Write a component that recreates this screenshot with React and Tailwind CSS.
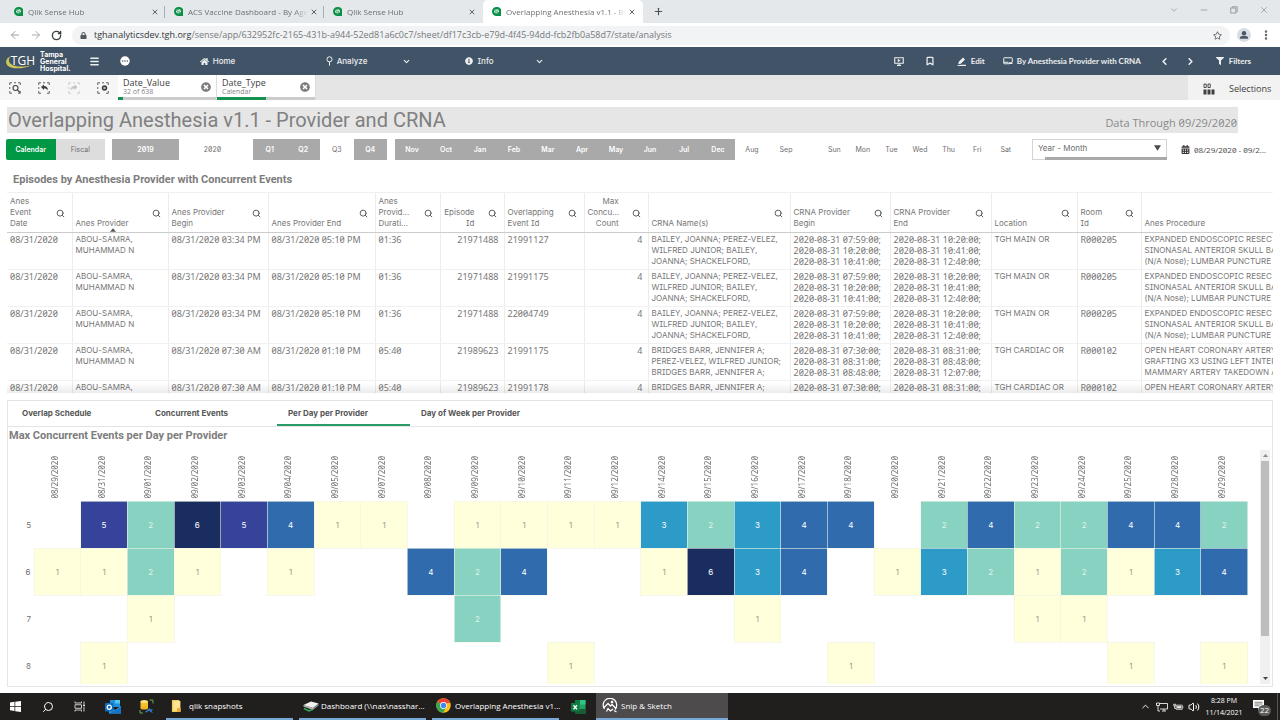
import React from "react";
import { FaHome, FaInfoCircle, FaFilter, FaLock, FaCalendarAlt, FaRegStar, FaTimesCircle } from "react-icons/fa";
import { ArrowLeft, ArrowRight, RotateCw, X, Plus, Minus, ChevronDown, ChevronLeft, ChevronRight, ChevronUp, Search, Menu, Bookmark, MoreVertical, Volume2 } from "lucide-react";

const QLIK = "font-[Inter,'Liberation_Sans',sans-serif] [font-feature-settings:'cv08','zero']";
const NUM = "font-['Noto_Sans','Liberation_Sans',sans-serif] text-[9px] [font-feature-settings:'zero']";

/* ---------- Browser ---------- */

function QlikMark() {
  return (
    <svg viewBox="0 0 18 18" className="size-[9px] shrink-0" aria-hidden="true">
      <path d="M9 0a9 9 0 1 0 0 18h9v-4.5A9 9 0 0 0 9 0z" fill="#0a8f46" />
      <circle cx="9" cy="8.600" r="4.600" fill="#fff" />
      <path d="M11 6.500a2.800 1.800 0 1 0-2 2.300 2.600 1.700 0 1 1-2.400 2" fill="none" stroke="#0a8f46" strokeWidth="1.700" />
    </svg>
  );
}

const BROWSER_TABS = [
  { title: "Qlik Sense Hub", width: "w-[160px]" },
  { title: "ACS Vaccine Dashboard - By Age", width: "w-[159px]" },
  { title: "Qlik Sense Hub", width: "w-[159px]" },
  { title: "Overlapping Anesthesia v1.1 - By", width: "w-[160px]", active: true },
];

const WINDOW_BUTTON = "flex w-[30px] shrink-0 items-center justify-center";

function BrowserTabs() {
  return (
    <div className="flex h-[23px] items-stretch bg-[#e4e8ea] pl-[5px] text-[#6d7073]">
      {BROWSER_TABS.map((tab, i) => (
        <div
          key={i}
          className={`flex shrink-0 items-center gap-[5px] pr-[7px] pl-[9px] ${tab.width} ${tab.active ? "rounded-t-[5px] bg-white" : ""}`}
        >
          <QlikMark />
          <a href="#tab" className="-mr-[3px] min-w-0 flex-1 overflow-hidden whitespace-nowrap text-[8px] [mask-image:linear-gradient(to_right,black_88%,transparent)]">
            {tab.title}
          </a>
          <button aria-label="Close tab" className="text-[#5f6367]"><X className="size-2" strokeWidth={3} /></button>
          {i < 2 && <span className="-mr-[7px] h-3 w-px bg-[#9fb0b8]" />}
        </div>
      ))}
      <button aria-label="New tab" className="ml-[10px] text-[#4c5054]"><Plus className="size-[11px]" strokeWidth={2.500} /></button>
      <div className="ml-auto flex items-stretch pr-[1px] pb-1 text-[#9a9da0]">
        <button aria-label="Search tabs" className={WINDOW_BUTTON}><ChevronDown className="size-[10px]" strokeWidth={2} /></button>
        <button aria-label="Minimize" className={WINDOW_BUTTON}><Minus className="size-[10px]" strokeWidth={2} /></button>
        <button aria-label="Restore" className={WINDOW_BUTTON}>
          <svg viewBox="0 0 16 16" className="size-2" fill="none" stroke="currentColor" strokeWidth="2"><rect x="1.500" y="4" width="10" height="10" /><path d="M4.500 4V1.500h10v10H12" /></svg>
        </button>
        <button aria-label="Close" className={WINDOW_BUTTON}><X className="size-[10px]" strokeWidth={2} /></button>
      </div>
    </div>
  );
}

function AddressBar() {
  return (
    <div className="flex h-6 items-center bg-white pr-2 pl-[9px] text-[#5f6367]">
      <button aria-label="Back" className="text-[#9b9ea1]"><ArrowLeft className="size-3" strokeWidth={2} /></button>
      <button aria-label="Forward" className="ml-[9px] text-[#a8abad]"><ArrowRight className="size-3" strokeWidth={2} /></button>
      <button aria-label="Reload" className="ml-[9px] text-[#3c4043]"><RotateCw className="size-[11px]" strokeWidth={3} /></button>
      <div className="ml-[10px] flex h-[19px] flex-1 items-center rounded-full bg-[#f1f3f4] pr-2 pl-2">
        <FaLock className="size-[7px] text-[#55595d]" />
        <div className="ml-[7px] flex-1 whitespace-nowrap text-[9px] text-[#75797d]">
          <span className="text-[#35383b]">tghanalyticsdev.tgh.org</span>/sense/app/632952fc-2165-431b-a944-52ed81a6c0c7/sheet/df17c3cb-e79d-4f45-94dd-fcb2fb0a58d7/state/analysis
        </div>
        <button aria-label="Bookmark this page"><FaRegStar className="size-[9px]" /></button>
      </div>
      <button aria-label="Profile" className="ml-[7px] flex size-[14px] items-center justify-center rounded-full bg-[#d9dee4] text-[#4b5869]">
        <svg viewBox="0 0 16 16" className="size-[10px]" fill="currentColor"><circle cx="8" cy="5" r="3.500" /><path d="M1.500 14v-1.500C1.500 10 5 9.300 8 9.300s6.500.7 6.500 3.200V14z" /></svg>
      </button>
      <button aria-label="Browser menu" className="ml-[9px]"><MoreVertical className="size-3" strokeWidth={3} /></button>
    </div>
  );
}

/* ---------- Application header ---------- */

function Logo() {
  return (
    <div className="flex w-[69px] items-center gap-[5px] text-white">
      <div className="relative flex h-[18px] w-[29px] shrink-0 items-center justify-end">
        <svg viewBox="0 0 58 36" className="absolute inset-0 h-full w-full" aria-hidden="true">
          <path d="M10 8C0 12-3 22 4 28c9 7 32 6 48-2-14 4-34 5-42-2C4 19 5 13 10 8z" fill="#cfc65a" />
        </svg>
        <span className="relative pb-px font-['Open_Sans',sans-serif] text-[12px] leading-none">TGH</span>
      </div>
      <span className="text-[7px] leading-[7px] font-bold">
        <span className="block">Tampa</span>
        <span className="block">General</span>
        <span className="block">Hospital.</span>
      </span>
    </div>
  );
}

function NavItem({ icon, label, menu }) {
  return (
    <div className="relative flex w-[133px] items-center justify-center">
      <a href="#nav" className={`flex items-center gap-1 ${menu ? "pr-2" : ""}`}>{icon}{label}</a>
      {menu && (
        <button aria-label={`${label} menu`} className="absolute right-[6px]"><ChevronDown className="size-[9px]" strokeWidth={3} /></button>
      )}
    </div>
  );
}

function AppNav() {
  return (
    <header className={`flex h-7 items-stretch bg-[#415366] pr-[29px] pl-[6px] text-[8px] font-medium text-white/90 ${QLIK}`}>
      <Logo />
      <button aria-label="Navigation" className="ml-[14px]"><Menu className="size-[11px]" strokeWidth={3} /></button>
      <button aria-label="More" className="mr-[21px] ml-5">
        <svg viewBox="0 0 20 20" className="size-[10px]"><circle cx="10" cy="10" r="9.500" fill="#fff" /><g fill="#415366"><circle cx="5.500" cy="10" r="1.500" /><circle cx="10" cy="10" r="1.500" /><circle cx="14.500" cy="10" r="1.500" /></g></svg>
      </button>
      <nav className="flex">
        <NavItem label="Home" icon={<FaHome className="size-[9px]" />} />
        <NavItem
          label="Analyze"
          menu
          icon={<svg viewBox="0 0 12 18" className="h-[10px] w-[7px]" fill="none" stroke="currentColor" strokeWidth="1.800"><circle cx="6" cy="6" r="4.600" /><path d="M6 10.600V17.500" /></svg>}
        />
        <NavItem label="Info" menu icon={<FaInfoCircle className="size-2" />} />
      </nav>
      <div className="ml-auto flex items-center font-[Lato,sans-serif] font-bold">
        <button aria-label="Present">
          <svg viewBox="0 0 20 18" className="h-[9px] w-[10px]" fill="none" stroke="currentColor" strokeWidth="2.200"><path d="M1.500 1.500h17v11h-17z" /><path d="M6 16.800h8M10 12.500v4" /><path d="M7.500 3.700l5.500 3.300-5.500 3.300z" fill="currentColor" stroke="none" /></svg>
        </button>
        <button aria-label="Bookmarks" className="ml-[21px]"><Bookmark className="size-[10px]" strokeWidth={3} /></button>
        <button className="ml-[22px] flex items-center gap-[5px]">
          <svg viewBox="0 0 18 18" className="size-[9px]" fill="currentColor"><path d="M12 1l4 4-8.500 8.500-5 1 1-5zM9 15.500h9V18H1v-1.500z" /></svg>
          Edit
        </button>
        <button className="ml-[18px] flex items-center gap-1">
          <svg viewBox="0 0 20 16" className="h-2 w-[10px]" fill="none" stroke="currentColor" strokeWidth="2"><path d="M13 13.500H2.500a1 1 0 0 1-1-1v-10a1 1 0 0 1 1-1h15a1 1 0 0 1 1 1V10M1.500 10.500H11" /><path d="M12 10.500h7v3.500h-7z" fill="currentColor" stroke="none" /></svg>
          By Anesthesia Provider with CRNA
        </button>
        <button aria-label="Previous sheet" className="ml-[18px]"><ChevronLeft className="size-[11px]" strokeWidth={3.500} /></button>
        <button aria-label="Next sheet" className="ml-[15px]"><ChevronRight className="size-[11px]" strokeWidth={3.500} /></button>
        <button className="ml-5 flex items-center gap-[5px]"><FaFilter className="size-2" />Filters</button>
      </div>
    </header>
  );
}

function DashedTool({ label, faded, children }) {
  return (
    <button aria-label={label} className={faded ? "text-[#c4c4c4]" : "text-[#404040]"}>
      <svg viewBox="0 0 24 24" className="size-3" fill="none" stroke="currentColor" strokeWidth="2.200">
        <path d="M1.500 6V1.500H6M10 1.500h4M18 1.500h4.500V6M1.500 10v4M1.500 18v4.500H6M18 22.500h4.500V18" strokeWidth="1.600" />
        {children}
      </svg>
    </button>
  );
}

function SelectionItem({ name, value, share }) {
  return (
    <div className="relative flex w-[99px] items-center justify-between border-r border-[#dddddd] bg-white pr-[5px] pb-[2px] pl-[5px]">
      <div className="text-[#404040]">
        <div className="text-[9px] leading-[10px]">{name}</div>
        <div className="font-['Open_Sans',sans-serif] text-[7px] leading-2 text-[#858585]">{value}</div>
      </div>
      <button aria-label={`Clear ${name}`} className="text-[#7c7c7c]"><FaTimesCircle className="size-[10px]" /></button>
      <div className="absolute inset-x-0 bottom-0 h-[3px] bg-[#cccccc]"><div className="h-full bg-[#14924f]" style={{ width: `${share}%` }} /></div>
    </div>
  );
}

function SelectionBar() {
  return (
    <div className="flex h-[25px] bg-[#e5e5e5] font-['Open_Sans',sans-serif]">
      <div className="flex w-[118px] items-center justify-between bg-[#f6f6f6] pt-px pr-[9px] pl-[9px]">
        <DashedTool label="Smart search"><circle cx="13" cy="12" r="5" /><path d="M17 16l5 5" /></DashedTool>
        <DashedTool label="Step back"><path d="M6 10l6-5v3c5 0 8 3 8 9-2-3-4-4-8-4v3z" fill="currentColor" stroke="none" /></DashedTool>
        <DashedTool label="Step forward" faded><path d="M19 10l-6-5v3c-5 0-8 3-8 9 2-3 4-4 8-4v3z" fill="currentColor" stroke="none" /></DashedTool>
        <DashedTool label="Clear all selections"><circle cx="15" cy="12" r="5.500" fill="currentColor" stroke="none" /><path d="M13 10l4 4M17 10l-4 4" stroke="#fff" strokeWidth="1.500" /></DashedTool>
      </div>
      <SelectionItem name="Date_Value" value="32 of 638" share={5} />
      <SelectionItem name="Date_Type" value="Calendar" share={50} />
      <button className="ml-auto flex w-[92px] items-center gap-[14px] bg-[#f2f2f2] pt-[2px] pl-[15px] text-[9px] text-[#404040]">
        <svg viewBox="0 0 24 24" className="size-3" fill="none" stroke="currentColor" strokeWidth="1.800"><path d="M2 2h4.500v7H2zM10 2h4.500v7H10z" /><path d="M1 13h6v10H1zM9 13h6v10H9zM17 13h6v10h-6z" fill="currentColor" stroke="none" /></svg>
        Selections
      </button>
    </div>
  );
}

/* ---------- Sheet ---------- */

const BTN = "flex-1 text-[7px] leading-none";
const TAKEN = "bg-[#a9a9a9] font-semibold text-white";
const OPEN = "bg-white text-[#6e6e6e]";

function FilterGroup({ items, className }) {
  return (
    <div className={`flex min-w-0 ${className}`}>
      {items.map(([label, taken]) => (
        <button key={label} className={`${BTN} ${taken ? TAKEN : OPEN}`}>{label}</button>
      ))}
    </div>
  );
}

const MONTHS = ["Nov", "Oct", "Jan", "Feb", "Mar", "Apr", "May", "Jun", "Jul", "Dec"].map((m) => [m, true]).concat([["Aug"], ["Sep"]]);
const DAYS = ["Sun", "Mon", "Tue", "Wed", "Thu", "Fri", "Sat"].map((d) => [d]);

function Filters() {
  return (
    <div className="mt-[6px] flex h-[21px] pr-[7px] pl-[6px]">
      <div className="mr-[7px] flex flex-[99]">
        <button className={`${BTN} rounded-l-[2px] bg-[#009845] font-semibold text-white`}>Calendar</button>
        <button className={`${BTN} bg-[#dddddd] text-[#6e6e6e]`}>Fiscal</button>
      </div>
      <FilterGroup items={[["2019", true], ["2020"]]} className="mr-[7px] flex-[134]" />
      <FilterGroup items={[["Q1", true], ["Q2", true], ["Q3"], ["Q4", true]]} className="mr-2 flex-[134]" />
      <FilterGroup items={MONTHS} className="mr-[17px] flex-[408]" />
      <FilterGroup items={DAYS} className="mr-3 flex-[200]" />
      <div className="relative mr-[14px] flex-[135]">
        <select aria-label="Year - Month" className="block h-full w-full appearance-none border border-[#d4d4d4] bg-white pb-[3px] pl-[5px] text-[8px] text-[#6e6e6e]">
          <option>Year - Month</option>
        </select>
        <svg viewBox="0 0 10 8" className="pointer-events-none absolute top-[6px] right-[6px] h-[6px] w-[7px]"><path d="M0 0h10L5 8z" fill="#4a4a4a" /></svg>
        <div className="absolute right-0 bottom-0 left-[13px] h-[3px] bg-[#a9a9a9]" />
      </div>
      <button className="flex flex-[92] items-center justify-start gap-1 text-[8px] whitespace-nowrap text-[#4a4a4a]">
        <FaCalendarAlt className="size-[9px] shrink-0 text-[#333333]" />
        <span className="font-['Open_Sans',sans-serif]">08/29/2020 - 09/2...</span>
      </button>
    </div>
  );
}

const COLUMNS = [
  { label: ["Anes", "Event", "Date"], width: "w-[65px]" },
  { label: ["Anes Provider"], width: "w-24", sorted: true },
  { label: ["Anes Provider", "Begin"], width: "w-[100px]" },
  { label: ["Anes Provider End"], width: "w-[107px]" },
  { label: ["Anes", "Provid...", "Durati..."], width: "w-[65px]" },
  { label: ["Episode", "Id"], width: "w-16", right: true },
  { label: ["Overlapping", "Event Id"], width: "w-20" },
  { label: ["Max", "Concu...", "Count"], width: "w-16", right: true },
  { label: ["CRNA Name(s)"], width: "w-[142px]" },
  { label: ["CRNA Provider", "Begin"], width: "w-[100px]" },
  { label: ["CRNA Provider", "End"], width: "w-[101px]" },
  { label: ["Location"], width: "w-[86px]" },
  { label: ["Room", "Id"], width: "w-16" },
  { label: ["Anes Procedure"], width: "w-auto", last: true },
];

const SAMRA = "ABOU-SAMRA,\nMUHAMMAD N";
const BAILEY = "BAILEY, JOANNA; PEREZ-VELEZ,\nWILFRED JUNIOR; BAILEY,\nJOANNA; SHACKELFORD,";
const BRIDGES = "BRIDGES BARR, JENNIFER A;\nPEREZ-VELEZ, WILFRED JUNIOR;\nBRIDGES BARR, JENNIFER A;";
const BEGIN_A = "2020-08-31 07:59:00;\n2020-08-31 10:20:00;\n2020-08-31 10:41:00;";
const END_A = "2020-08-31 10:20:00;\n2020-08-31 10:41:00;\n2020-08-31 12:40:00;";
const BEGIN_B = "2020-08-31 07:30:00;\n2020-08-31 08:31:00;\n2020-08-31 08:48:00;";
const END_B = "2020-08-31 08:31:00;\n2020-08-31 08:48:00;\n2020-08-31 12:07:00;";
const PROC_A = "EXPANDED ENDOSCOPIC RESEC\nSINONASAL ANTERIOR SKULL BA\n(N/A Nose); LUMBAR PUNCTURE (";
const PROC_B = "OPEN HEART CORONARY ARTERY\nGRAFTING X3 USING LEFT INTER\nMAMMARY ARTERY TAKEDOWN A";

const early = (overlap) => ["08/31/2020", SAMRA, "08/31/2020 03:34 PM", "08/31/2020 05:10 PM", "01:36", "21971488", overlap, "4", BAILEY, BEGIN_A, END_A, "TGH MAIN OR", "R000205", PROC_A];
const late = (overlap) => ["08/31/2020", SAMRA, "08/31/2020 07:30 AM", "08/31/2020 01:10 PM", "05:40", "21989623", overlap, "4", BRIDGES, BEGIN_B, END_B, "TGH CARDIAC OR", "R000102", PROC_B];
const firstLines = (row) => row.map((cell) => cell.split("\n")[0]);
const ROWS = [early("21991127"), early("21991175"), early("22004749"), late("21991175"), firstLines(late("21991178"))];
const TEXT_COLUMNS = [1, 8, 11, 13];

function EpisodeTable() {
  return (
    <div className="relative mt-[5px] mr-[7px] ml-[7px] h-[201px] overflow-hidden border-t border-[#f0f0f0]">
      <table className="w-full table-fixed border-collapse text-left text-[8px] leading-[11px] text-[#777777]">
        <thead>
          <tr>
            {COLUMNS.map((c) => (
              <th key={c.label.join(" ")} scope="col" className={`relative h-[39px] border-b border-[#cccccc] p-0 pb-[3px] pl-[3px] align-bottom font-normal ${c.width} ${c.last ? "" : "border-r border-r-[#ececec]"} ${c.right ? "pr-[29px] text-right" : ""}`}>
                {c.label.map((line) => <div key={line} className="whitespace-nowrap">{line}</div>)}
                {c.sorted && <svg viewBox="0 0 10 6" className="absolute bottom-0 left-[37px] h-1 w-[6px]"><path d="M5 0l5 6H0z" fill="#555" /></svg>}
                {!c.last && (
                  <button aria-label={`Search ${c.label.join(" ")}`} className="absolute top-4 right-[7px]">
                    <Search className="size-[9px] text-[#555555]" strokeWidth={2.500} />
                  </button>
                )}
              </th>
            ))}
          </tr>
        </thead>
        <tbody>
          {ROWS.map((row, r) => (
            <tr key={r}>
              {row.map((cell, i) => (
                <td key={i} className={`h-[37px] border-b border-[#f1f1f1] p-0 pt-px pl-[3px] align-top whitespace-pre ${i === 13 ? "" : "border-r border-r-[#ececec]"} ${COLUMNS[i].right ? "pr-[5px] text-right" : ""} ${TEXT_COLUMNS.includes(i) ? "" : NUM}`}>{cell}</td>
              ))}
            </tr>
          ))}
        </tbody>
      </table>
      <div className="pointer-events-none absolute inset-x-0 bottom-0 h-[10px] bg-gradient-to-t from-black/8 to-transparent" />
    </div>
  );
}

const DATES = ["08/29", "08/31", "09/01", "09/02", "09/03", "09/04", "09/05", "09/07", "09/08", "09/09", "09/10", "09/11", "09/12", "09/14", "09/15", "09/16", "09/17", "09/18", "09/20", "09/21", "09/22", "09/23", "09/24", "09/25", "09/28", "09/29"];
const HEAT = [
  { label: "5", cells: ".5265411.111132344.2422442" },
  { label: "6", cells: "1121.1..424..1634.13212134" },
  { label: "7", cells: "..1......2.....1.....11..." },
  { label: "8", cells: ".1.........1.....1.....1.1" },
];
const HEAT_STYLE = {
  1: "bg-[#ffffdb] text-[#9a9a8a]",
  2: "bg-[#88d2c1] text-[#dff2ec]",
  3: "bg-[#2d9bc8] text-white",
  4: "bg-[#306bae] text-white",
  5: "bg-[#35439b] text-white",
  6: "bg-[#1a2d61] text-white",
};

function HeatMap() {
  return (
    <div className="flex h-60 overflow-hidden pr-[2px]">
      <table className="h-60 flex-1 table-fixed border-collapse text-center text-[8px] text-[#707070]">
        <thead>
          <tr className="h-[57px]">
            <th className="w-[26px] p-0" aria-label="Providers" />
            {DATES.map((d) => (
              <th key={d} scope="col" className="p-0 pr-[5px] pb-[2px] text-center align-bottom leading-none font-normal">
                <span className="inline-block rotate-180 text-left align-bottom font-['Noto_Sans',sans-serif] text-[8px] leading-3 whitespace-nowrap [font-feature-settings:'zero'] [writing-mode:vertical-rl]">{d}/2020</span>
              </th>
            ))}
          </tr>
        </thead>
        <tbody>
          {HEAT.map((row) => (
            <tr key={row.label}>
              <th scope="row" className="p-0 pr-[3px] text-right font-normal">{row.label}</th>
              {row.cells.split("").map((v, i) => (
                <td key={i} className={`h-[47px] p-0 ${v === "." ? "" : `border border-[#f0f3e6]/60 ${HEAT_STYLE[v]}`}`}>{v === "." ? "" : v}</td>
              ))}
            </tr>
          ))}
        </tbody>
      </table>
      <div className="mt-[6px] ml-3 flex w-[10px] flex-col items-center bg-[#f0f0f0]">
        <button aria-label="Scroll up" className="flex h-[11px] items-center"><svg viewBox="0 0 10 6" className="h-[3px] w-[5px]"><path d="M5 0l5 6H0z" fill="#8a8a8a" /></svg></button>
        <div className="h-[175px] w-2 bg-[#bdbdbd]" />
        <button aria-label="Scroll down" className="mt-auto flex h-[11px] items-center"><svg viewBox="0 0 10 6" className="h-[3px] w-[5px]"><path d="M5 6l5-6H0z" fill="#444" /></svg></button>
      </div>
    </div>
  );
}

const SHEET_TABS = ["Overlap Schedule", "Concurrent Events", "Per Day per Provider", "Day of Week per Provider"];

function ChartPanel() {
  return (
    <section className="mx-[7px] mt-[7px] mb-[6px] border border-[#e4e4e4] pb-[2px]">
      <div role="tablist" className="flex h-[26px] border-b border-[#e4e4e4] pl-[3px]">
        {SHEET_TABS.map((t, i) => (
          <button key={t} role="tab" aria-selected={i === 2} className={`w-[133px] border-b-2 pl-[11px] text-left text-[8px] font-bold whitespace-nowrap text-[#555555] ${i === 2 ? "border-[#2a9a68]" : "border-transparent"}`}>{t}</button>
        ))}
      </div>
      <h2 className="pt-px pl-px font-[Roboto,sans-serif] text-[11px] leading-4 font-bold text-[#7d7d7d]">Max Concurrent Events per Day per Provider</h2>
      <HeatMap />
    </section>
  );
}

function Sheet() {
  return (
    <main className={`flex-1 bg-white pt-[7px] ${QLIK}`}>
      <div className="mr-[42px] ml-[7px] flex h-[26px] items-center justify-between bg-[#e6e6e6] pr-px pl-px text-[#808080]">
        <h1 className="font-[Roboto,sans-serif] text-[20px] leading-[26px]">Overlapping Anesthesia v1.1 - Provider and CRNA</h1>
        <span className="pt-[6px] font-['Open_Sans',sans-serif] text-[11px] text-[#8a8a8a] [font-feature-settings:'zero']">Data Through 09/29/2020</span>
      </div>
      <Filters />
      <h2 className="mt-[13px] pl-[13px] font-[Roboto,sans-serif] text-[11px] leading-[14px] font-bold text-[#7d7d7d]">Episodes by Anesthesia Provider with Concurrent Events</h2>
      <EpisodeTable />
      <ChartPanel />
    </main>
  );
}

/* ---------- Task bar ---------- */

function TaskButton({ icon, label, active, className }) {
  return (
    <button className={`flex items-center gap-[6px] border-b-2 border-[#76a9d8] pl-1 whitespace-nowrap ${active ? "bg-[#4d4b4b]" : ""} ${className}`}>{icon}{label}</button>
  );
}

function TaskBar() {
  return (
    <footer className="flex h-[27px] items-stretch bg-[#211f1e] font-['Open_Sans',sans-serif] text-[8px] text-white">
      <button aria-label="Start" className="w-8 pl-[10px]">
        <svg viewBox="0 0 22 22" className="size-[11px]" fill="#fff"><path d="M0 3l9-1.300V10H0zM10.500 1.500L22 0v10H10.500zM0 11.500h9v8.300L0 18.500zM10.500 11.500H22V22l-11.500-1.600z" /></svg>
      </button>
      <button aria-label="Search" className="w-8 pl-[10px]"><Search className="size-3 -scale-x-100" strokeWidth={2} /></button>
      <button aria-label="Task view" className="w-8 pl-[10px]">
        <svg viewBox="0 0 24 22" className="h-[11px] w-3" fill="none" stroke="#ddd" strokeWidth="1.800"><path d="M2 1v3h13V1M2 21v-3h13v3M2 7.500h13v7H2zM20 1v5M20 11v10" /><path d="M18 7h4v3h-4z" fill="#ddd" stroke="none" /></svg>
      </button>
      <button aria-label="Outlook" className="w-[34px] pl-[9px]">
        <svg viewBox="0 0 32 28" className="h-[14px] w-4"><path d="M10 0h20v14H10z" fill="#1f8fe0" /><path d="M20 0h10v7H20z" fill="#50c8f5" /><path d="M8 12l12 8 12-8v15H8z" fill="#35a6ec" /><path d="M8 27l24-13v13z" fill="#1672c4" /><rect y="6" width="17" height="17" rx="2" fill="#0f6cbd" /><circle cx="8.500" cy="14.500" r="4.200" fill="none" stroke="#fff" strokeWidth="2.500" /></svg>
      </button>
      <button aria-label="Database tool" className="w-9 pl-[9px]">
        <svg viewBox="0 0 30 30" className="size-[15px]"><path d="M3 5h15v13H3z" fill="#f6c02c" /><ellipse cx="10.500" cy="5" rx="7.500" ry="3.200" fill="#ffe07a" /><ellipse cx="10.500" cy="18" rx="7.500" ry="3" fill="#f0b41e" /><path d="M12 26l9-8 2 3 5-1-3 4 3 4-5-2-3-3-5 4z" fill="#2f7cc4" /><path d="M21 2h7v7M2 22v6h6" fill="none" stroke="#5fae4a" strokeWidth="2" /></svg>
      </button>
      <TaskButton className="mr-[6px] w-[127px]" label="qlik snapshots" icon={<svg viewBox="0 0 26 28" className="ml-px h-[14px] w-3"><path d="M2 1h15l3 3v23H2z" fill="#f5c955" /><path d="M5 3h15v19l-15 3z" fill="#ffe394" /><path d="M13 18h8v9h-8z" fill="#e9ad3a" /></svg>} />
      <TaskButton className="mr-[6px] w-[127px]" label="Dashboard (\\nas\nasshar..." icon={<svg viewBox="0 0 32 24" className="-mr-[4px] h-3 w-4 shrink-0"><path d="M1 10l15-7 15 4-11 9z" fill="#f2f2f2" /><path d="M1 10l19 6v4L1 13z" fill="#b7b7b7" /><path d="M20 16l11-9v4l-11 9z" fill="#8d8d8d" /><path d="M2 17l10 5 7-3" fill="none" stroke="#35a852" strokeWidth="3" /></svg>} />
      <TaskButton className="mr-[6px] w-[127px]" label="Overlapping Anesthesia v1..." icon={<svg viewBox="0 0 30 30" className="-mr-[2px] size-[15px] shrink-0"><circle cx="15" cy="15" r="14.500" fill="#fbc116" /><path d="M15 15L2.500 7.700A14.500 14.500 0 0 1 27.500 7.700z" fill="#ea4335" /><path d="M15 15L2.500 7.700A14.500 14.500 0 0 0 14 29.500l6.500-11z" fill="#34a853" /><path d="M15 8.500h12.900" stroke="#ea4335" strokeWidth="3" /><circle cx="15" cy="15" r="6.800" fill="#fff" /><circle cx="15" cy="15" r="5.300" fill="#4285f4" /></svg>} />
      <button aria-label="Excel" className="w-[31px] pl-[6px]">
        <svg viewBox="0 0 30 28" className="h-[14px] w-[15px]"><path d="M8 0h21v28H8z" fill="#21a366" /><path d="M8 0h10v9H8z" fill="#107c41" /><path d="M18 0h11v9H18z" fill="#33c481" /><path d="M8 18h21v10H8z" fill="#185c37" /><rect y="6" width="17" height="17" rx="1" fill="#107c41" /><path d="M5 10.500l7 8M12 10.500l-7 8" stroke="#fff" strokeWidth="2.500" /></svg>
      </button>
      <TaskButton active className="w-[132px] pl-[6px]" label="Snip & Sketch" icon={<svg viewBox="0 0 32 30" className="-mr-[3px] h-[15px] w-4" fill="none" stroke="#fff" strokeWidth="2.500"><path d="M5 22A13.500 13.500 0 1 1 26 23" /><path d="M3 20l9-9 5 5 3-3 8 8" /><path d="M9 27l3-6 5 5 5-4M24 25l5 3" /><circle cx="20" cy="8" r="1.500" fill="#fff" /></svg>} />
      <div className="ml-auto flex items-center">
        <button aria-label="Hidden icons"><ChevronUp className="size-[11px]" strokeWidth={2} /></button>
        <svg viewBox="0 0 24 20" className="ml-[5px] h-[10px] w-3" fill="none" stroke="#eee" strokeWidth="1.800"><path d="M8 3h15v11H8M12 18h8M16 14v4M1 2h6v5H1zM4 7v11h4" /></svg>
        <svg viewBox="0 0 24 16" className="ml-[5px] h-2 w-[11px]" fill="none" stroke="#eee" strokeWidth="1.800"><path d="M7 4h13v9H7zM21.500 7v3M1 2h5M2 2v4h3V2M3.500 6v5h3" /><path d="M9 6h9v5H9z" fill="#eee" stroke="none" /></svg>
        <Volume2 className="ml-1 size-3" strokeWidth={2} />
        <div className="ml-[3px] w-[42px] text-center text-[7px] leading-[12px]">8:28 PM<br />11/14/2021</div>
        <button aria-label="22 notifications" className="relative ml-2 size-[18px]">
          <svg viewBox="0 0 22 22" className="absolute top-[2px] left-0 size-[11px]"><path d="M0 0h22v16h-7l-5 6v-6H0z" fill="#fff" /><path d="M3 4.500h16M3 8h16M3 11.500h10" stroke="#555" strokeWidth="1.500" /></svg>
          <span className="absolute right-0 bottom-0 flex h-[11px] w-[13px] items-center justify-center rounded-full bg-[#5b5b5b] text-[8px] leading-none">22</span>
        </button>
        <span className="ml-[6px] h-full w-px bg-[#555555]" />
        <span className="w-[2px]" />
      </div>
    </footer>
  );
}

export default function App() {
  return (
    <div className="flex min-h-screen flex-col bg-white font-['Open_Sans','Liberation_Sans',sans-serif]">
      <BrowserTabs />
      <AddressBar />
      <AppNav />
      <SelectionBar />
      <Sheet />
      <TaskBar />
    </div>
  );
}
